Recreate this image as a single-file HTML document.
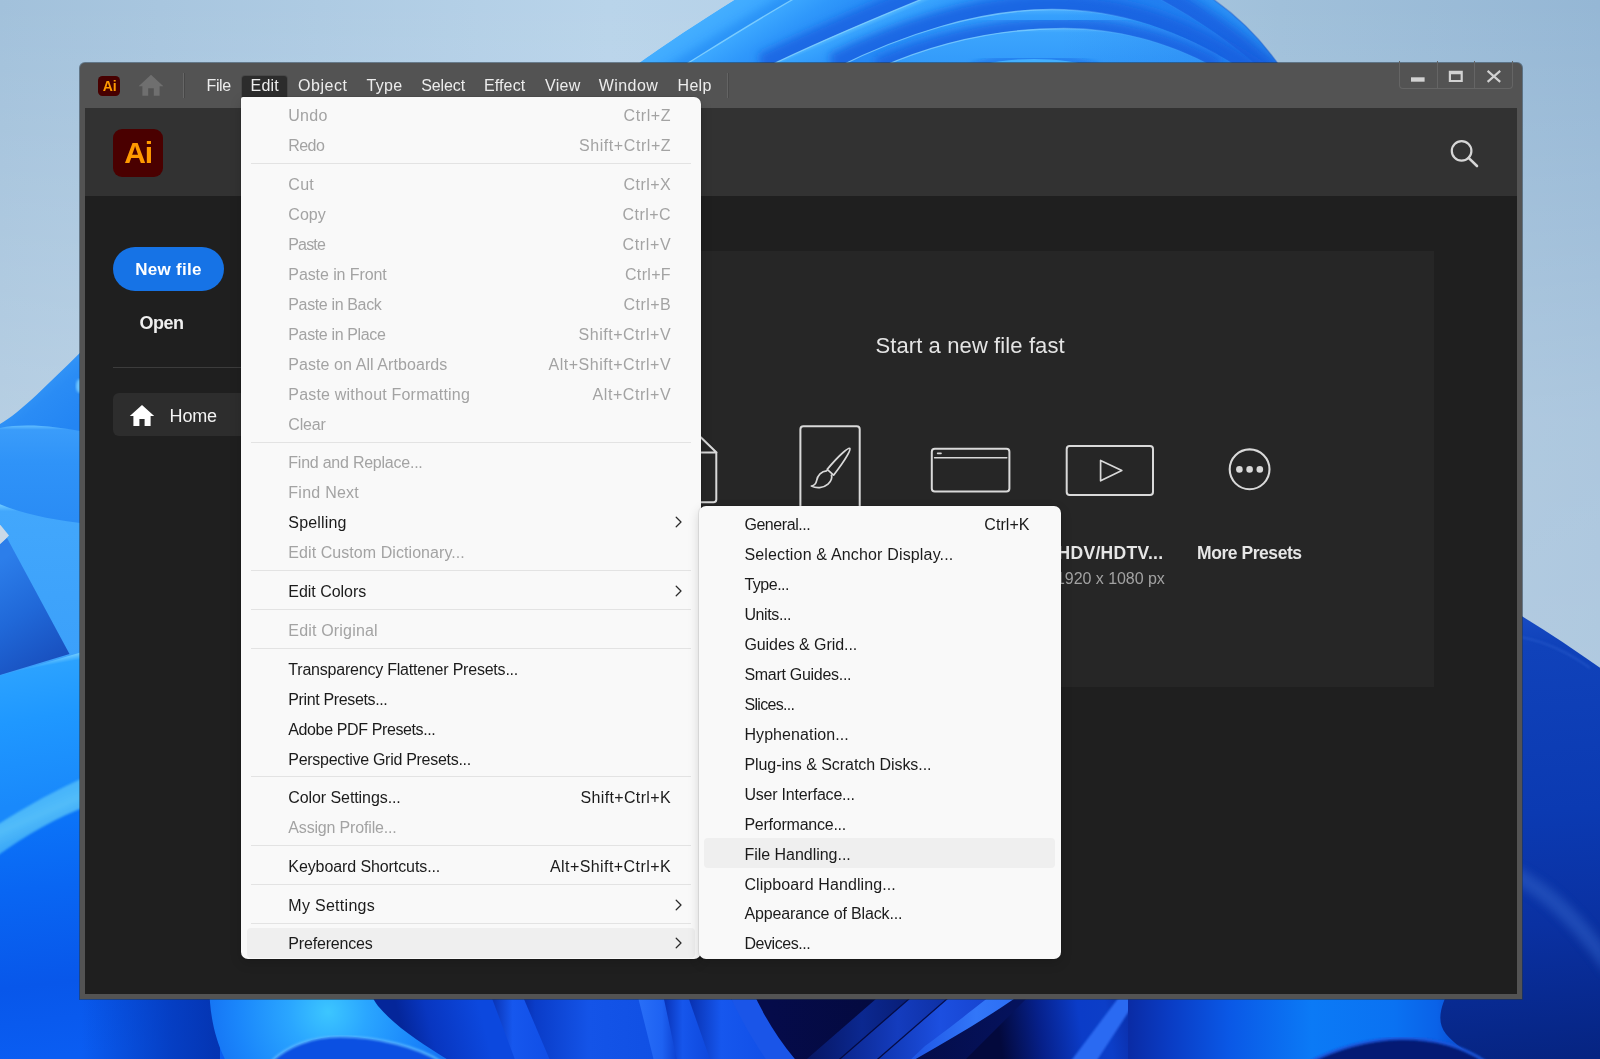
<!DOCTYPE html>
<html lang="en"><head><meta charset="utf-8"><title>Adobe Illustrator - Edit - Preferences</title>
<style>
html,body{margin:0;padding:0}
body{width:1600px;height:1059px;overflow:hidden;position:relative;background:#a9c6de;font-family:"Liberation Sans",sans-serif}
.abs{position:absolute}
#wall{position:absolute;left:0;top:0}
.t{position:absolute;white-space:nowrap;font-family:"Liberation Sans",sans-serif}
#win{position:absolute;left:80px;top:63px;width:1441.5px;height:935.5px;background:#535353;border-radius:5px 5px 0 0;box-shadow:0 0 0 1px rgba(40,52,64,.55)}
#hdr{position:absolute;left:85px;top:108px;width:1432px;height:88px;background:#323232}
#bodyarea{position:absolute;left:85px;top:196px;width:1432px;height:798px;background:#1f1f1f}
#panel{position:absolute;left:268px;top:250.5px;width:1165.5px;height:436.5px;background:#262626}
#editbox{position:absolute;left:242.4px;top:75.6px;width:45px;height:24px;background:#2c2c2c;border-radius:3px 3px 0 0;box-shadow:0 0 0 1px rgba(0,0,0,.12)}
#tbsep{position:absolute;left:183px;top:72.5px;width:1px;height:25.5px;background:#676767;box-shadow:1px 0 0 #474747}
#tbsep2{position:absolute;left:727px;top:72.5px;width:1px;height:25.5px;background:#646464;box-shadow:1px 0 0 #494949}
#aismall{position:absolute;left:98px;top:75.7px;width:22px;height:20px;border-radius:4.5px;background:#470000}
#aibig{position:absolute;left:113px;top:129px;width:50px;height:48px;border-radius:9px;background:#4a0000}
#ctl{position:absolute;left:1398.7px;top:61px;width:112px;height:27px;border:1px solid #656565;border-top:none;border-radius:0 0 4px 4px}
#ctl i{position:absolute;top:0;width:1px;height:27px;background:#656565}
#newfile{position:absolute;left:113px;top:246.6px;width:111px;height:44.6px;border-radius:23px;background:#1673e6}
#sbline{position:absolute;left:113px;top:366.5px;width:130px;height:1px;background:#3c3c3c}
#homeitem{position:absolute;left:113px;top:393px;width:140px;height:43px;border-radius:6px;background:#2d2d2d}
.menu{position:absolute;background:#f9f9f9;border-radius:7px;box-shadow:0 0 0 1px rgba(0,0,0,.07),0 4px 12px rgba(0,0,0,.16)}
#editmenu{left:241.3px;top:97px;width:459.7px;height:862.2px;border-radius:2px 7px 7px 7px}
#submenu{left:698.8px;top:506.2px;width:361.9px;height:453px}
.sep{position:absolute;left:250.5px;width:440px;height:1px;background:#e3e3e3}
.hl{position:absolute;background:#efefef;border-radius:4px}
#app,div[role=menu]{position:absolute;left:0;top:0;width:1600px;height:1059px;will-change:transform}

</style></head>
<body>
<div id="desktop">
<svg id="wall" width="1600" height="1059" viewBox="0 0 1600 1059">
<defs>
 <linearGradient id="sky" x1="0" y1="0" x2="1600" y2="0" gradientUnits="userSpaceOnUse">
  <stop offset="0" stop-color="#a2c1db"/><stop offset=".2" stop-color="#aecbe3"/><stop offset=".38" stop-color="#b9d4ea"/>
  <stop offset=".55" stop-color="#b4d0e7"/><stop offset=".8" stop-color="#a0c0da"/><stop offset="1" stop-color="#95b7d5"/>
 </linearGradient>
 <linearGradient id="skyv" x1="0" y1="0" x2="0" y2="700" gradientUnits="userSpaceOnUse">
  <stop offset="0" stop-color="#ffffff" stop-opacity="0"/><stop offset=".6" stop-color="#ffffff" stop-opacity=".22"/><stop offset="1" stop-color="#ffffff" stop-opacity=".26"/>
 </linearGradient>
 <filter id="b1" x="-5%" y="-5%" width="110%" height="110%"><feGaussianBlur stdDeviation="1"/></filter>
 <filter id="b2" x="-10%" y="-10%" width="120%" height="120%"><feGaussianBlur stdDeviation="2.2"/></filter>
 <filter id="b4" x="-20%" y="-20%" width="140%" height="140%"><feGaussianBlur stdDeviation="4.5"/></filter>
 <filter id="b8" x="-30%" y="-30%" width="160%" height="160%"><feGaussianBlur stdDeviation="9"/></filter>

 <!-- top bloom -->
 <clipPath id="bloomclip"><path d="M739,-3 C705,18 668,42 632,68 L1281,68 C1263,42 1241,18 1210,-3 Z"/></clipPath>
 <linearGradient id="bloombase" x1="640" y1="0" x2="1290" y2="0" gradientUnits="userSpaceOnUse">
  <stop offset="0" stop-color="#47acfd"/><stop offset=".12" stop-color="#2b8ff5"/><stop offset=".3" stop-color="#1f7bee"/>
  <stop offset=".6" stop-color="#1a6ae6"/><stop offset=".85" stop-color="#1a5cd8"/><stop offset="1" stop-color="#1d59cf"/>
 </linearGradient>
 <linearGradient id="pg1" x1="676" y1="30" x2="712" y2="86" gradientUnits="userSpaceOnUse">
  <stop offset="0" stop-color="#6ac6ff"/><stop offset=".1" stop-color="#44aeff"/><stop offset=".5" stop-color="#38a5ff"/><stop offset="1" stop-color="#339ffd"/>
 </linearGradient>
 <linearGradient id="pg2" x1="735" y1="28" x2="765" y2="75" gradientUnits="userSpaceOnUse">
  <stop offset="0" stop-color="#5fc0ff"/><stop offset=".1" stop-color="#3ca8ff"/><stop offset=".5" stop-color="#2f98fb"/><stop offset="1" stop-color="#2589f5"/>
 </linearGradient>
 <linearGradient id="pg3" x1="840" y1="33" x2="859" y2="78" gradientUnits="userSpaceOnUse">
  <stop offset="0" stop-color="#5abcff"/><stop offset=".1" stop-color="#38a4fe"/><stop offset=".55" stop-color="#2a90f8"/><stop offset="1" stop-color="#2384f3"/>
 </linearGradient>
 <linearGradient id="pg4" x1="0" y1="8" x2="0" y2="60" gradientUnits="userSpaceOnUse">
  <stop offset="0" stop-color="#4fb2ff"/><stop offset=".14" stop-color="#36a0fd"/><stop offset=".6" stop-color="#2b92f9"/><stop offset="1" stop-color="#2588f5"/>
 </linearGradient>
 <linearGradient id="pg5" x1="0" y1="27" x2="0" y2="68" gradientUnits="userSpaceOnUse">
  <stop offset="0" stop-color="#55b6ff"/><stop offset=".14" stop-color="#3ca5fd"/><stop offset="1" stop-color="#3199fa"/>
 </linearGradient>
 <linearGradient id="hfade" x1="840" y1="0" x2="1280" y2="0" gradientUnits="userSpaceOnUse">
  <stop offset="0" stop-color="#0f52d8" stop-opacity="0"/><stop offset=".5" stop-color="#0f52d8" stop-opacity="0"/><stop offset=".85" stop-color="#0f52d8" stop-opacity=".14"/><stop offset="1" stop-color="#0f4ccc" stop-opacity=".3"/>
 </linearGradient>

 <linearGradient id="hlg" x1="640" y1="0" x2="1290" y2="0" gradientUnits="userSpaceOnUse">
  <stop offset="0" stop-color="#8ad6ff" stop-opacity=".85"/><stop offset=".6" stop-color="#86d4ff" stop-opacity=".7"/><stop offset=".76" stop-color="#6fc0ff" stop-opacity=".12"/><stop offset="1" stop-color="#6fc0ff" stop-opacity="0"/>
 </linearGradient>
 <!-- left strip -->
 <linearGradient id="lA" x1="20" y1="370" x2="70" y2="430" gradientUnits="userSpaceOnUse">
  <stop offset="0" stop-color="#3d9ff8"/><stop offset=".5" stop-color="#2a8cf5"/><stop offset="1" stop-color="#2385f3"/>
 </linearGradient>
 <linearGradient id="lB" x1="0" y1="425" x2="0" y2="520" gradientUnits="userSpaceOnUse">
  <stop offset="0" stop-color="#66c2ff"/><stop offset=".05" stop-color="#3a9cfa"/><stop offset=".4" stop-color="#2f93f8"/><stop offset="1" stop-color="#2a8cf5"/>
 </linearGradient>
 <linearGradient id="lC" x1="0" y1="505" x2="0" y2="680" gradientUnits="userSpaceOnUse">
  <stop offset="0" stop-color="#6cc8ff"/><stop offset=".035" stop-color="#42a7fc"/><stop offset="1" stop-color="#3a9ffa"/>
 </linearGradient>
 <linearGradient id="lTri" x1="0" y1="560" x2="62" y2="660" gradientUnits="userSpaceOnUse">
  <stop offset="0" stop-color="#2c7eea"/><stop offset=".5" stop-color="#2068d8"/><stop offset="1" stop-color="#184fbe"/>
 </linearGradient>
 <linearGradient id="lD" x1="20" y1="665" x2="45" y2="800" gradientUnits="userSpaceOnUse">
  <stop offset="0" stop-color="#66c6ff"/><stop offset=".04" stop-color="#2ba2ff"/><stop offset=".4" stop-color="#1f98ff"/><stop offset="1" stop-color="#1989fb"/>
 </linearGradient>
 <linearGradient id="lE" x1="0" y1="800" x2="30" y2="1059" gradientUnits="userSpaceOnUse">
  <stop offset="0" stop-color="#0c78fa"/><stop offset=".35" stop-color="#0966f3"/><stop offset=".72" stop-color="#0857ea"/><stop offset="1" stop-color="#0a5df2"/>
 </linearGradient>
 <linearGradient id="lBand" x1="30" y1="800" x2="44" y2="832" gradientUnits="userSpaceOnUse">
  <stop offset="0" stop-color="#44b2fb"/><stop offset=".5" stop-color="#52bcf9"/><stop offset="1" stop-color="#3ba8f8"/>
 </linearGradient>

 <!-- bottom strip -->
 <linearGradient id="bl" x1="0" y1="0" x2="215" y2="0" gradientUnits="userSpaceOnUse">
  <stop offset="0" stop-color="#0437b8" stop-opacity="0"/><stop offset=".38" stop-color="#0437b8" stop-opacity="0"/><stop offset=".8" stop-color="#0437b8" stop-opacity=".8"/><stop offset="1" stop-color="#0433b0" stop-opacity=".95"/>
 </linearGradient>
 <radialGradient id="pF" cx="328" cy="1012" r="130" gradientUnits="userSpaceOnUse">
  <stop offset="0" stop-color="#3cc6ff"/><stop offset=".3" stop-color="#2aa6ff"/><stop offset=".7" stop-color="#1a86fb"/><stop offset="1" stop-color="#146ff2"/>
 </radialGradient>
 <linearGradient id="bmid" x1="392" y1="990" x2="470" y2="970" gradientUnits="userSpaceOnUse">
  <stop offset="0" stop-color="#04269a"/><stop offset=".35" stop-color="#0836c0"/><stop offset="1" stop-color="#0c48de"/>
 </linearGradient>
 <linearGradient id="rb1" x1="0" y1="0" x2="1" y2="0"><stop offset="0" stop-color="#062aa6"/><stop offset=".35" stop-color="#1657ee"/><stop offset="1" stop-color="#0f4ce4"/></linearGradient>
 <linearGradient id="rb2" x1="0" y1="0" x2="1" y2="0"><stop offset="0" stop-color="#2a70f8"/><stop offset=".6" stop-color="#1e62f2"/><stop offset="1" stop-color="#0a3ccc"/></linearGradient>
 <linearGradient id="rb3" x1="0" y1="0" x2="1" y2="0"><stop offset="0" stop-color="#062aa6"/><stop offset=".12" stop-color="#0a3cc8"/><stop offset=".5" stop-color="#1454e8"/><stop offset="1" stop-color="#1050e4"/></linearGradient>
 <linearGradient id="rb4" x1="0" y1="0" x2="1" y2="0"><stop offset="0" stop-color="#062cae"/><stop offset=".4" stop-color="#1656ec"/><stop offset="1" stop-color="#0d46da"/></linearGradient>
 <linearGradient id="navy" x1="770" y1="0" x2="1160" y2="0" gradientUnits="userSpaceOnUse">
  <stop offset="0" stop-color="#050b4a"/><stop offset=".25" stop-color="#040a40"/><stop offset="1" stop-color="#061a78"/>
 </linearGradient>
 <linearGradient id="d1" x1="0" y1="0" x2="1" y2="0"><stop offset="0" stop-color="#06145e"/><stop offset=".5" stop-color="#0b2890"/><stop offset="1" stop-color="#071a6e"/></linearGradient>
 <linearGradient id="d2" x1="0" y1="0" x2="1" y2="0"><stop offset="0" stop-color="#0a2488"/><stop offset=".5" stop-color="#143cbe"/><stop offset="1" stop-color="#0c2c9c"/></linearGradient>
 <linearGradient id="d3" x1="0" y1="0" x2="1" y2="0"><stop offset="0" stop-color="#0e32aa"/><stop offset=".5" stop-color="#1c4fe0"/><stop offset="1" stop-color="#143fc8"/></linearGradient>
 <linearGradient id="d4" x1="0" y1="0" x2="1" y2="0"><stop offset="0" stop-color="#1c52e2"/><stop offset=".55" stop-color="#3276f8"/><stop offset="1" stop-color="#2a6af2"/></linearGradient>
 <linearGradient id="d5" x1="1000" y1="1040" x2="1135" y2="1020" gradientUnits="userSpaceOnUse">
  <stop offset="0" stop-color="#03093c"/><stop offset=".3" stop-color="#06208a"/><stop offset=".6" stop-color="#0b3cc8"/><stop offset=".8" stop-color="#0c3ec8"/><stop offset="1" stop-color="#0a2ca6"/>
 </linearGradient>
 <linearGradient id="br" x1="1130" y1="0" x2="1460" y2="0" gradientUnits="userSpaceOnUse">
  <stop offset="0" stop-color="#0a2ca6"/><stop offset=".12" stop-color="#0a3cc4"/><stop offset=".3" stop-color="#0a58e6"/><stop offset=".55" stop-color="#0b7af6"/><stop offset=".8" stop-color="#0a72f2"/><stop offset=".93" stop-color="#0a62e8"/><stop offset="1" stop-color="#0a4cd0"/>
 </linearGradient>
 <linearGradient id="rstrip" x1="1522" y1="610" x2="1560" y2="1059" gradientUnits="userSpaceOnUse">
  <stop offset="0" stop-color="#184cc4"/><stop offset=".08" stop-color="#1042ba"/><stop offset=".45" stop-color="#0b3ab2"/><stop offset=".7" stop-color="#0a31a2"/><stop offset="1" stop-color="#062482"/>
 </linearGradient>
</defs>

<rect width="1600" height="1059" fill="url(#sky)"/>
<rect width="1600" height="1059" fill="url(#skyv)"/>

<!-- ===== top bloom ===== -->
<g clip-path="url(#bloomclip)">
 <path d="M739,-3 C705,18 668,42 632,68 L1281,68 C1263,42 1241,18 1210,-3 Z" fill="url(#pg1)"/>
 <path d="M680,68 C722,42 760,18 797,-3 L797,-60 L1186,-60 L1186,-3 C1220,20 1246,42 1272,68 Z" fill="none" stroke="#1560e0" stroke-opacity="0.25" stroke-width="18" filter="url(#b4)"/>
 <path d="M680,68 C722,42 760,18 797,-3 L797,-60 L1186,-60 L1186,-3 C1220,20 1246,42 1272,68 Z" fill="url(#pg2)"/>
 <path d="M680,68 C722,42 760,18 797,-3 L797,-60 L1186,-60 L1186,-3 C1220,20 1246,42 1272,68 Z" fill="none" stroke="url(#hlg)" stroke-width="1.3"/>
 <path d="M765,68 C822,40 876,18 927,-3 L927,-60 L1156,-60 L1156,-3 C1196,18 1230,42 1260,68 Z" fill="none" stroke="#1560e0" stroke-opacity="0.8" stroke-width="30" filter="url(#b4)"/>
 <path d="M765,68 C822,40 876,18 927,-3 L927,-60 L1156,-60 L1156,-3 C1196,18 1230,42 1260,68 Z" fill="url(#pg3)"/>
 <path d="M765,68 C822,40 876,18 927,-3 L927,-60 L1156,-60 L1156,-3 C1196,18 1230,42 1260,68 Z" fill="none" stroke="url(#hlg)" stroke-width="1.3"/>
 <path d="M836,68 C900,36 978,9.500 1052,9.500 C1120,9.500 1180,30 1240,68 Z" fill="none" stroke="#1560e0" stroke-opacity="0.85" stroke-width="30" filter="url(#b4)"/>
 <path d="M836,68 C900,36 978,9.500 1052,9.500 C1120,9.500 1180,30 1240,68 Z" fill="url(#pg4)"/>
 <path d="M836,68 C900,36 978,9.500 1052,9.500 C1120,9.500 1180,30 1240,68 Z" fill="none" stroke="url(#hlg)" stroke-width="1.3"/>
 <path d="M879,68 C940,41 1000,28.500 1064,28.500 C1115,28.500 1165,40 1216,68 Z" fill="none" stroke="#1560e0" stroke-opacity="0.8" stroke-width="22" filter="url(#b4)"/>
 <path d="M879,68 C940,41 1000,28.500 1064,28.500 C1115,28.500 1165,40 1216,68 Z" fill="url(#pg5)"/>
 <path d="M879,68 C940,41 1000,28.500 1064,28.500 C1115,28.500 1165,40 1216,68 Z" fill="none" stroke="url(#hlg)" stroke-width="1.3"/>
 <path d="M972,68 C1000,57 1060,55 1098,68 Z" fill="none" stroke="#1a6ae6" stroke-opacity="0.5" stroke-width="10" filter="url(#b2)"/>
 <path d="M972,68 C1000,57 1060,55 1098,68 Z" fill="#43b0ff"/>
 <rect x="840" y="-5" width="460" height="80" fill="url(#hfade)"/>
</g>
<path d="M1210,-3 C1241,18 1263,42 1281,68" fill="none" stroke="#2a62c8" stroke-opacity=".45" stroke-width="1.5"/>

<!-- ===== left strip ===== -->
<g>
 <path d="M-6,427 C14,419 44,388 90,343 L90,445 L-6,445 Z" fill="url(#lA)"/>
 <ellipse cx="80" cy="386" rx="4" ry="7" fill="#6cc4ff" filter="url(#b1)"/>
 <path d="M-6,429.500 C18,423 50,425 90,433 L90,540 L-6,540 Z" fill="url(#lB)"/>
 <path d="M-6,501.500 C18,513 50,520 90,524 L90,700 L-6,700 Z" fill="url(#lC)"/>
 <path d="M-2,522 L9,535.500 L-2,547 Z" fill="#c9d9e7"/>
 <path d="M-2,546 L7,538 L69.500,654 L-2,675.500 Z" fill="url(#lTri)"/>
 <path d="M-6,677 C25,669 55,660.500 90,649.500 L90,840 L-6,870 Z" fill="url(#lD)"/>
 <path d="M-6,840 C25,820 55,802 90,790 L90,985 L225,985 L225,1065 L-6,1065 Z" fill="url(#lE)"/>
 <path d="M-6,827 C25,807 55,790 90,775 L90,805 C55,818 25,836 -6,858 Z" fill="url(#lBand)" filter="url(#b1)"/>
</g>

<!-- ===== bottom strip ===== -->
<g>
  <rect x="-6" y="985" width="226" height="80" fill="url(#bl)"/>
 <rect x="360" y="985" width="425" height="80" fill="url(#bmid)"/>
 <!-- petal F -->
 <path d="M209.500,985 C209,1010 214,1040 228,1065 L456,1065 C430,1048 398,1030 378,1006 C372,998 370,992 369,985 Z" fill="url(#pF)"/>
 <path d="M268,1065 C285,1046 312,1036.500 340,1036.500 C375,1036.500 420,1046 446,1065 Z" fill="#0b50e2"/>
 <path d="M268,1065 C285,1046 312,1036.500 340,1036.500 C375,1036.500 420,1046 446,1065" fill="none" stroke="#58b6ff" stroke-width="2.2" filter="url(#b1)"/>
 <!-- ribbons -->
 <path d="M492,985 L487,985 L517,1065 L560,1065 L522,985 Z" fill="url(#rb1)"/>
 <path d="M518,985 L552,1065 L660,1065 L640,985 Z" fill="url(#rb3)"/>
 <path d="M635,985 L655,1065 L680,1065 L663,985 Z" fill="url(#rb2)"/>
 <path d="M661,985 L678,1065 L715,1065 L690,985 Z" fill="url(#rb4)"/>
 <path d="M684,985 L712,1065 L790,1065 L728,985 Z" fill="url(#rb1)"/>
 <!-- navy -->
 <path d="M722,985 C738,1010 760,1040 790,1065 L1170,1065 L1170,985 Z" fill="url(#navy)"/>
 <path d="M752,990 C764,1016 778,1040 800,1065 L770,1065 C752,1040 738,1014 728,992 Z" fill="#1a55e8"/>
 <path d="M800,1065 L892,985 L924,985 L832,1065 Z" fill="url(#d1)"/>
 <path d="M834,1065 L926,985 L962,985 L870,1065 Z" fill="url(#d2)"/>
 <path d="M872,1065 L964,985 L1008,985 L924,1050 L905,1065 Z" fill="url(#d3)"/>
 <path d="M905,1065 C950,1040 1000,1010 1034,985 L1004,985 C985,1000 950,1028 925,1046 Z" fill="url(#d4)"/>
 <path d="M960,1065 L1040,985 L1170,985 L1170,1065 Z" fill="url(#d5)"/>
 <path d="M1068,1065 L1128,985 L1146,985 L1094,1065 Z" fill="#2c6af2" filter="url(#b1)"/>
 <!-- bottom right -->
 <rect x="1128" y="985" width="340" height="80" fill="url(#br)"/>
 <path d="M1120,985 L1150,985 L1100,1065 L1085,1065 Z" fill="#0a2ca6" opacity=".0"/>
 <path d="M1452,985 C1440,1005 1436,1022 1446,1034 C1456,1046 1470,1054 1488,1065 L1610,1065 L1610,985 Z" fill="url(#rstrip)"/>
 <path d="M1305,1065 C1335,1048 1370,1039 1400,1038.500 C1430,1038 1462,1044 1490,1065 Z" fill="#041a74"/>
 <path d="M1305,1065 C1335,1048 1370,1039 1400,1038.500 C1430,1038 1462,1044 1490,1065" fill="none" stroke="#1a55d8" stroke-width="3" filter="url(#b1)"/>
</g>

<!-- ===== right strip ===== -->
<g>
 <path d="M1515,612 C1545,630 1575,650 1606,672 L1606,1065 L1515,1065 Z" fill="url(#rstrip)"/>
 <path d="M1515,866 C1545,880 1580,910 1606,948 L1606,975 C1580,935 1545,900 1515,884 Z" fill="#2f5ec6" opacity=".55" filter="url(#b4)"/>
 <path d="M1515,636 C1540,640 1565,650 1590,668" fill="none" stroke="#2a5ccc" stroke-width="2" opacity=".6" filter="url(#b1)"/>
</g>
</svg>

</div>
<div id="app" role="application" aria-label="Adobe Illustrator">
<div id="win"></div>
<div id="hdr"></div>
<div id="bodyarea"></div>
<div id="panel"></div>
<div id="aismall"></div>
<svg class="abs" style="left:138px;top:74px" width="26" height="23" viewBox="0 0 26 23"><path d="M13 0.8 L25.4 12.2 H21.6 V21.7 H15.8 V14.2 H10.2 V21.7 H4.4 V12.2 H0.6 Z" fill="#6f6f6f"/></svg>
<div id="tbsep"></div>
<div id="editbox"></div>
<div id="tbsep2"></div>
<div id="ctl"><i style="left:37px"></i><i style="left:74px"></i></div>
<svg class="abs" style="left:1400px;top:62px" width="112" height="27" viewBox="0 0 112 27">
 <rect x="11" y="15.3" width="13.6" height="4.4" fill="#d2d2d2"/>
 <path d="M48.8 8.8 H62.8 V20 H48.8 Z M51 12.2 V17.9 H60.6 V12.2 Z" fill="#d2d2d2" fill-rule="evenodd"/>
 <path d="M87.6 8.9 L100.2 19.9 M100.2 8.9 L87.6 19.9" stroke="#d2d2d2" stroke-width="2.1" fill="none"/>
</svg>
<div id="aibig"></div>
<svg class="abs" style="left:1446px;top:136px" width="36" height="36" viewBox="0 0 36 36"><circle cx="15.6" cy="14.9" r="9.8" fill="none" stroke="#d6d6d6" stroke-width="2.2"/><path d="M22.6 21.9 L31 30" stroke="#d6d6d6" stroke-width="2.6" stroke-linecap="round"/></svg>
<div id="newfile"></div>
<div id="sbline"></div>
<div id="homeitem"></div>
<svg class="abs" style="left:129px;top:404px" width="26" height="23" viewBox="0 0 26 23"><path d="M13 1 L25.2 12 H21.6 V22 H15.6 V15 H10.4 V22 H4.4 V12 H0.8 Z" fill="#ffffff"/></svg>
<!-- preset icons -->
<svg class="abs" style="left:690px;top:420px" width="660" height="100" viewBox="690 420 660 100" fill="none" stroke="#d9d9d9" stroke-width="2" stroke-linejoin="round" stroke-linecap="round">
 <path d="M690 432 L701 437.5 L716.5 452.5 H690 M716.3 452.5 V499.5 Q716.3 502.3 713.5 502.3 H690"/>
 <rect x="800.4" y="426.3" width="59.3" height="100" rx="3"/>
 <path d="M849.8 448.4 C851 449.6 846 459 833.6 475.2 L827.2 469.4 C840 454 848.6 447.4 849.8 448.4 Z M826.6 470.8 C821.5 471 817.5 475.5 816.6 480.6 C816 484 813.6 485.6 811.4 486 C816 488.4 823.5 488.3 828 484.2 C831.5 481 832.3 477 831.4 475.2" stroke-width="1.7"/>
 <rect x="931.8" y="448.8" width="77.6" height="42.6" rx="3"/>
 <path d="M934.5 457.8 H1006.8" stroke-width="1.4"/>
 <path d="M937.6 453.4 H941" stroke-width="1.6"/>
 <rect x="1066.7" y="446" width="86.3" height="49" rx="3"/>
 <path d="M1100.6 460.4 V480.8 L1121.8 470.6 Z" stroke-width="1.7"/>
 <circle cx="1249.6" cy="469.3" r="19.9" stroke-width="2.1"/>
 <g fill="#d9d9d9" stroke="none"><circle cx="1239.4" cy="469.4" r="3.3"/><circle cx="1249.6" cy="469.4" r="3.3"/><circle cx="1259.8" cy="469.4" r="3.3"/></g>
</svg>

<span class="t" style="left:206.50px;top:74.00px;font-size:16px;line-height:23px;color:#ececec;letter-spacing:-0.360px;">File</span>
<span class="t" style="left:250.60px;top:74.00px;font-size:16px;line-height:23px;color:#ececec;letter-spacing:0.141px;">Edit</span>
<span class="t" style="left:298.00px;top:74.00px;font-size:16px;line-height:23px;color:#ececec;letter-spacing:0.560px;">Object</span>
<span class="t" style="left:366.60px;top:74.00px;font-size:16px;line-height:23px;color:#ececec;letter-spacing:0.254px;">Type</span>
<span class="t" style="left:421.25px;top:74.00px;font-size:16px;line-height:23px;color:#ececec;letter-spacing:-0.104px;">Select</span>
<span class="t" style="left:484.00px;top:74.00px;font-size:16px;line-height:23px;color:#ececec;letter-spacing:0.115px;">Effect</span>
<span class="t" style="left:545.00px;top:74.00px;font-size:16px;line-height:23px;color:#ececec;letter-spacing:0.270px;">View</span>
<span class="t" style="left:598.75px;top:74.00px;font-size:16px;line-height:23px;color:#ececec;letter-spacing:0.429px;">Window</span>
<span class="t" style="left:677.50px;top:74.00px;font-size:16px;line-height:23px;color:#ececec;letter-spacing:0.331px;">Help</span>
<span class="t" style="left:135.30px;top:257.00px;font-size:17px;line-height:25px;color:#ffffff;font-weight:700;letter-spacing:0.286px;">New file</span>
<span class="t" style="left:139.50px;top:310.00px;font-size:18px;line-height:26px;color:#f0f0f0;font-weight:700;letter-spacing:-0.539px;">Open</span>
<span class="t" style="left:169.60px;top:403.00px;font-size:18px;line-height:26px;color:#f2f2f2;letter-spacing:-0.172px;">Home</span>
<span class="t" style="left:875.40px;top:330.00px;font-size:22px;line-height:31px;color:#e4e4e4;letter-spacing:0.110px;">Start a new file fast</span>
<span class="t" style="left:1057.50px;top:541.00px;font-size:17.5px;line-height:24px;color:#e6e6e6;font-weight:700;letter-spacing:0.324px;">HDV/HDTV...</span>
<span class="t" style="left:1056.00px;top:567.00px;font-size:16px;line-height:23px;color:#a2a2a2;letter-spacing:-0.048px;">1920 x 1080 px</span>
<span class="t" style="left:1197.00px;top:541.00px;font-size:17.5px;line-height:24px;color:#e6e6e6;font-weight:700;letter-spacing:-0.441px;">More Presets</span>
<span class="t" style="left:124.20px;top:131.00px;font-size:30px;line-height:43px;color:#ff9a00;font-weight:700;letter-spacing:-1.100px;">Ai</span>
<span class="t" style="left:102.80px;top:76.00px;font-size:14px;line-height:20px;color:#ff9a00;font-weight:700;letter-spacing:-0.100px;">Ai</span>
</div>
<div role="menu" aria-label="Edit">
<div class="menu" id="editmenu"></div>
<div class="hl" style="left:246.5px;top:927.5px;width:448.5px;height:30px"></div>
<div class="sep" style="top:162.9px"></div>
<div class="sep" style="top:442.1px"></div>
<div class="sep" style="top:569.9px"></div>
<div class="sep" style="top:608.9px"></div>
<div class="sep" style="top:647.9px"></div>
<div class="sep" style="top:776.1px"></div>
<div class="sep" style="top:844.8px"></div>
<div class="sep" style="top:884.1px"></div>
<div class="sep" style="top:922.8px"></div>
<svg class="abs" style="left:674.0px;top:515.4px" width="10" height="14" viewBox="0 0 10 14"><path d="M2.2 2.2 L7 7 L2.2 11.8" fill="none" stroke="#2a2a2a" stroke-width="1.25" stroke-linecap="round" stroke-linejoin="round"/></svg>
<svg class="abs" style="left:674.0px;top:584.4px" width="10" height="14" viewBox="0 0 10 14"><path d="M2.2 2.2 L7 7 L2.2 11.8" fill="none" stroke="#2a2a2a" stroke-width="1.25" stroke-linecap="round" stroke-linejoin="round"/></svg>
<svg class="abs" style="left:674.0px;top:898.4px" width="10" height="14" viewBox="0 0 10 14"><path d="M2.2 2.2 L7 7 L2.2 11.8" fill="none" stroke="#2a2a2a" stroke-width="1.25" stroke-linecap="round" stroke-linejoin="round"/></svg>
<svg class="abs" style="left:674.0px;top:936.4px" width="10" height="14" viewBox="0 0 10 14"><path d="M2.2 2.2 L7 7 L2.2 11.8" fill="none" stroke="#2a2a2a" stroke-width="1.25" stroke-linecap="round" stroke-linejoin="round"/></svg>
<span class="t" style="left:288.30px;top:104.00px;font-size:16px;line-height:23px;color:#a3a3a3;letter-spacing:0.250px;">Undo</span>
<span class="t" style="left:623.50px;top:104.00px;font-size:16px;line-height:23px;color:#a3a3a3;letter-spacing:0.620px;">Ctrl+Z</span>
<span class="t" style="left:288.30px;top:134.00px;font-size:16px;line-height:23px;color:#a3a3a3;letter-spacing:-0.583px;">Redo</span>
<span class="t" style="left:579.00px;top:134.00px;font-size:16px;line-height:23px;color:#a3a3a3;letter-spacing:0.567px;">Shift+Ctrl+Z</span>
<span class="t" style="left:288.30px;top:173.00px;font-size:16px;line-height:23px;color:#a3a3a3;letter-spacing:0.297px;">Cut</span>
<span class="t" style="left:623.50px;top:173.00px;font-size:16px;line-height:23px;color:#a3a3a3;letter-spacing:0.439px;">Ctrl+X</span>
<span class="t" style="left:288.30px;top:203.00px;font-size:16px;line-height:23px;color:#a3a3a3;letter-spacing:0.047px;">Copy</span>
<span class="t" style="left:622.50px;top:203.00px;font-size:16px;line-height:23px;color:#a3a3a3;letter-spacing:0.464px;">Ctrl+C</span>
<span class="t" style="left:288.30px;top:233.00px;font-size:16px;line-height:23px;color:#a3a3a3;letter-spacing:-0.855px;">Paste</span>
<span class="t" style="left:622.50px;top:233.00px;font-size:16px;line-height:23px;color:#a3a3a3;letter-spacing:0.639px;">Ctrl+V</span>
<span class="t" style="left:288.30px;top:263.00px;font-size:16px;line-height:23px;color:#a3a3a3;letter-spacing:-0.085px;">Paste in Front</span>
<span class="t" style="left:625.00px;top:263.00px;font-size:16px;line-height:23px;color:#a3a3a3;letter-spacing:0.320px;">Ctrl+F</span>
<span class="t" style="left:288.30px;top:293.00px;font-size:16px;line-height:23px;color:#a3a3a3;letter-spacing:-0.361px;">Paste in Back</span>
<span class="t" style="left:623.50px;top:293.00px;font-size:16px;line-height:23px;color:#a3a3a3;letter-spacing:0.439px;">Ctrl+B</span>
<span class="t" style="left:288.30px;top:323.00px;font-size:16px;line-height:23px;color:#a3a3a3;letter-spacing:-0.368px;">Paste in Place</span>
<span class="t" style="left:578.50px;top:323.00px;font-size:16px;line-height:23px;color:#a3a3a3;letter-spacing:0.530px;">Shift+Ctrl+V</span>
<span class="t" style="left:288.30px;top:353.00px;font-size:16px;line-height:23px;color:#a3a3a3;letter-spacing:0.074px;">Paste on All Artboards</span>
<span class="t" style="left:548.50px;top:353.00px;font-size:16px;line-height:23px;color:#a3a3a3;letter-spacing:0.521px;">Alt+Shift+Ctrl+V</span>
<span class="t" style="left:288.30px;top:383.00px;font-size:16px;line-height:23px;color:#a3a3a3;letter-spacing:0.197px;">Paste without Formatting</span>
<span class="t" style="left:592.50px;top:383.00px;font-size:16px;line-height:23px;color:#a3a3a3;letter-spacing:0.575px;">Alt+Ctrl+V</span>
<span class="t" style="left:288.30px;top:413.00px;font-size:16px;line-height:23px;color:#a3a3a3;letter-spacing:-0.184px;">Clear</span>
<span class="t" style="left:288.30px;top:451.00px;font-size:16px;line-height:23px;color:#a3a3a3;letter-spacing:-0.236px;">Find and Replace...</span>
<span class="t" style="left:288.30px;top:481.00px;font-size:16px;line-height:23px;color:#a3a3a3;letter-spacing:0.254px;">Find Next</span>
<span class="t" style="left:288.30px;top:511.00px;font-size:16px;line-height:23px;color:#1b1b1b;letter-spacing:0.166px;">Spelling</span>
<span class="t" style="left:288.30px;top:541.00px;font-size:16px;line-height:23px;color:#a3a3a3;letter-spacing:0.068px;">Edit Custom Dictionary...</span>
<span class="t" style="left:288.30px;top:580.00px;font-size:16px;line-height:23px;color:#1b1b1b;letter-spacing:-0.035px;">Edit Colors</span>
<span class="t" style="left:288.30px;top:619.00px;font-size:16px;line-height:23px;color:#a3a3a3;letter-spacing:0.179px;">Edit Original</span>
<span class="t" style="left:288.30px;top:658.00px;font-size:16px;line-height:23px;color:#1b1b1b;letter-spacing:-0.214px;">Transparency Flattener Presets...</span>
<span class="t" style="left:288.30px;top:688.00px;font-size:16px;line-height:23px;color:#1b1b1b;letter-spacing:-0.361px;">Print Presets...</span>
<span class="t" style="left:288.30px;top:718.00px;font-size:16px;line-height:23px;color:#1b1b1b;letter-spacing:-0.381px;">Adobe PDF Presets...</span>
<span class="t" style="left:288.30px;top:748.00px;font-size:16px;line-height:23px;color:#1b1b1b;letter-spacing:-0.284px;">Perspective Grid Presets...</span>
<span class="t" style="left:288.30px;top:786.00px;font-size:16px;line-height:23px;color:#1b1b1b;letter-spacing:-0.083px;">Color Settings...</span>
<span class="t" style="left:580.50px;top:786.00px;font-size:16px;line-height:23px;color:#1b1b1b;letter-spacing:0.349px;">Shift+Ctrl+K</span>
<span class="t" style="left:288.30px;top:816.00px;font-size:16px;line-height:23px;color:#a3a3a3;letter-spacing:-0.166px;">Assign Profile...</span>
<span class="t" style="left:288.30px;top:855.00px;font-size:16px;line-height:23px;color:#1b1b1b;letter-spacing:-0.093px;">Keyboard Shortcuts...</span>
<span class="t" style="left:550.00px;top:855.00px;font-size:16px;line-height:23px;color:#1b1b1b;letter-spacing:0.421px;">Alt+Shift+Ctrl+K</span>
<span class="t" style="left:288.30px;top:894.00px;font-size:16px;line-height:23px;color:#1b1b1b;letter-spacing:0.291px;">My Settings</span>
<span class="t" style="left:288.30px;top:932.00px;font-size:16px;line-height:23px;color:#1b1b1b;letter-spacing:-0.177px;">Preferences</span>
</div>
<div role="menu" aria-label="Preferences">
<div class="menu" id="submenu"></div>
<div class="hl" style="left:703.8px;top:838px;width:351.4px;height:29.6px"></div>
<span class="t" style="left:744.40px;top:513.00px;font-size:16px;line-height:23px;color:#1b1b1b;letter-spacing:-0.430px;">General...</span>
<span class="t" style="left:984.25px;top:513.00px;font-size:16px;line-height:23px;color:#1b1b1b;letter-spacing:0.079px;">Ctrl+K</span>
<span class="t" style="left:744.40px;top:543.00px;font-size:16px;line-height:23px;color:#1b1b1b;letter-spacing:0.166px;">Selection &amp; Anchor Display...</span>
<span class="t" style="left:744.40px;top:573.00px;font-size:16px;line-height:23px;color:#1b1b1b;letter-spacing:-0.480px;">Type...</span>
<span class="t" style="left:744.40px;top:603.00px;font-size:16px;line-height:23px;color:#1b1b1b;letter-spacing:-0.378px;">Units...</span>
<span class="t" style="left:744.40px;top:633.00px;font-size:16px;line-height:23px;color:#1b1b1b;letter-spacing:-0.062px;">Guides &amp; Grid...</span>
<span class="t" style="left:744.40px;top:663.00px;font-size:16px;line-height:23px;color:#1b1b1b;letter-spacing:-0.286px;">Smart Guides...</span>
<span class="t" style="left:744.40px;top:693.00px;font-size:16px;line-height:23px;color:#1b1b1b;letter-spacing:-0.671px;">Slices...</span>
<span class="t" style="left:744.40px;top:723.00px;font-size:16px;line-height:23px;color:#1b1b1b;letter-spacing:0.093px;">Hyphenation...</span>
<span class="t" style="left:744.40px;top:753.00px;font-size:16px;line-height:23px;color:#1b1b1b;letter-spacing:-0.052px;">Plug-ins &amp; Scratch Disks...</span>
<span class="t" style="left:744.40px;top:783.00px;font-size:16px;line-height:23px;color:#1b1b1b;letter-spacing:-0.199px;">User Interface...</span>
<span class="t" style="left:744.40px;top:813.00px;font-size:16px;line-height:23px;color:#1b1b1b;letter-spacing:-0.234px;">Performance...</span>
<span class="t" style="left:744.40px;top:843.00px;font-size:16px;line-height:23px;color:#1b1b1b;letter-spacing:-0.021px;">File Handling...</span>
<span class="t" style="left:744.40px;top:873.00px;font-size:16px;line-height:23px;color:#1b1b1b;letter-spacing:0.099px;">Clipboard Handling...</span>
<span class="t" style="left:744.40px;top:902.00px;font-size:16px;line-height:23px;color:#1b1b1b;letter-spacing:-0.135px;">Appearance of Black...</span>
<span class="t" style="left:744.40px;top:932.00px;font-size:16px;line-height:23px;color:#1b1b1b;letter-spacing:-0.428px;">Devices...</span>
</div>
</body></html>
